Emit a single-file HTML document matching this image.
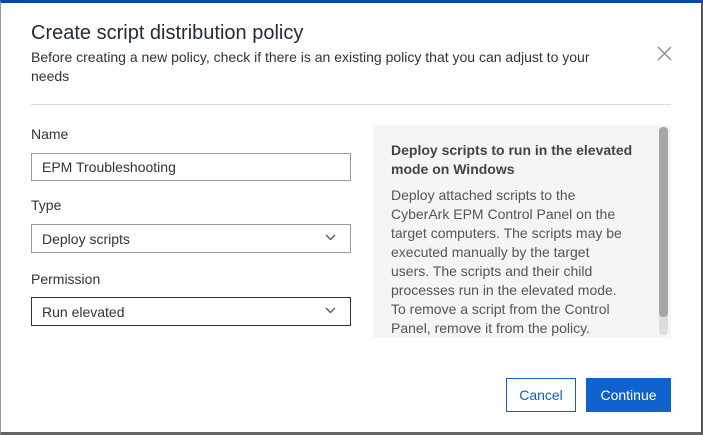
<!DOCTYPE html>
<html><head><style>
body{margin:0;width:703px;height:435px;background:#fff;font-family:"Liberation Sans",sans-serif;position:relative;overflow:hidden;color:#333}
.a{position:absolute}
.frame{left:0;top:0;border-top:3px solid #0b47a8;border-left:1px solid #999;border-right:2px solid #555;border-bottom:3px solid #666;box-sizing:border-box;width:703px;height:435px}
.lbl{font-size:14px;color:#333;left:31px}
.inp{left:31px;width:320px;height:29px;border:1px solid #999;box-sizing:border-box;font-size:14px;padding:6px 10px;color:#333}
.chev{position:absolute;right:14px;top:9px}
</style></head><body>
<div class="a frame"></div>
<div class="a" style="left:31px;top:22px;font-size:20px;color:#222c3a">Create script distribution policy</div>
<div class="a" style="left:31px;top:48px;font-size:14px;color:#333;line-height:19px;width:600px">Before creating a new policy, check if there is an existing policy that you can adjust to your<br>needs</div>
<svg class="a" style="left:657px;top:46px" width="15" height="15"><path d="M1 1L14 14M14 1L1 14" stroke="#888" stroke-width="1.3"/></svg>
<div class="a" style="left:31px;top:104px;width:640px;height:1px;background:#ddd"></div>
<div class="a lbl" style="top:126px">Name</div>
<div class="a inp" style="top:153px;height:28px;padding-top:5px">EPM Troubleshooting</div>
<div class="a lbl" style="top:197px">Type</div>
<div class="a inp" style="top:224px">Deploy scripts<svg class="chev" width="11" height="7"><path d="M1 1L5.5 5.5L10 1" fill="none" stroke="#555" stroke-width="1.3"/></svg></div>
<div class="a lbl" style="top:271px">Permission</div>
<div class="a inp" style="top:297px;border-color:#333">Run elevated<svg class="chev" width="11" height="7"><path d="M1 1L5.5 5.5L10 1" fill="none" stroke="#555" stroke-width="1.3"/></svg></div>
<div class="a" style="left:373px;top:125px;width:298px;height:213px;background:#f4f5f7;overflow:hidden">
<div style="position:absolute;left:18px;top:16px;width:270px;font-size:14px;font-weight:bold;color:#444;line-height:19px;white-space:nowrap">Deploy scripts to run in the elevated<br>mode on Windows</div>
<div style="position:absolute;left:18px;top:61px;width:270px;font-size:14px;color:#555;line-height:19px;white-space:nowrap">Deploy attached scripts to the<br>CyberArk EPM Control Panel on the<br>target computers. The scripts may be<br>executed manually by the target<br>users. The scripts and their child<br>processes run in the elevated mode.<br>To remove a script from the Control<br>Panel, remove it from the policy.</div>
<div style="position:absolute;left:286px;top:2px;width:9px;height:208px;background:#ddd;border-radius:4px"></div>
<div style="position:absolute;left:286px;top:2px;width:9px;height:190px;background:#a6a6a6;border-radius:4px"></div>
</div>
<div class="a" style="left:506px;top:378px;width:70px;height:34px;border:1px solid #1060c8;box-sizing:border-box;color:#1060c8;font-size:14px;text-align:center;line-height:32px">Cancel</div>
<div class="a" style="left:586px;top:378px;width:85px;height:34px;background:#1062cc;color:#fff;font-size:14px;text-align:center;line-height:34px">Continue</div>
</body></html>
